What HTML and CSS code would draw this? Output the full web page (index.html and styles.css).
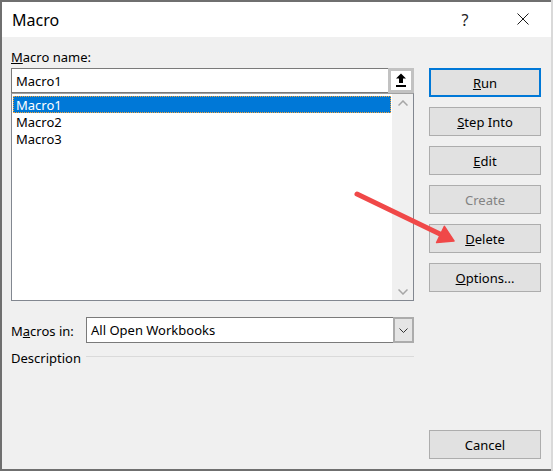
FILE: index.html
```html
<!DOCTYPE html>
<html>
<head>
<meta charset="utf-8">
<title>Macro</title>
<link rel="stylesheet" href="styles.css">
</head>
<body>
<div class="dialog">
  <div class="titlebar">
    <span class="title">Macro</span>
    <span class="help">?</span>
    <span class="close">
      <svg width="12" height="12" viewBox="0 0 12 12"><path d="M0.5 0.5 L11.5 11.5 M11.5 0.5 L0.5 11.5" stroke="#1a1a1a" stroke-width="1" fill="none"/></svg>
    </span>
  </div>
  <div class="content">
    <div class="left">
      <div class="label"><u>M</u>acro name:</div>
      <div class="namebox">
        <div class="nametext">Macro1</div>
        <div class="upbtn">
          <svg width="12" height="15" viewBox="0 0 12 15"><path d="M6 0.5 L11 5.5 L8 5.5 L8 10 L4 10 L4 5.5 L1 5.5 Z" fill="#000"/><rect x="1" y="12" width="10" height="2" fill="#000"/></svg>
        </div>
      </div>
      <div class="listbox">
        <div class="rows">
          <div class="row selected">Macro1</div>
          <div class="row">Macro2</div>
          <div class="row">Macro3</div>
        </div>
        <div class="scrollbar">
          <div class="sbtn">
            <svg width="10" height="6" viewBox="0 0 10 6"><path d="M0.5 5.5 L5 1 L9.5 5.5" stroke="#a6a6a6" stroke-width="1.5" fill="none"/></svg>
          </div>
          <div class="strack"></div>
          <div class="sbtn">
            <svg width="10" height="6" viewBox="0 0 10 6"><path d="M0.5 0.5 L5 5 L9.5 0.5" stroke="#a6a6a6" stroke-width="1.5" fill="none"/></svg>
          </div>
        </div>
      </div>
      <div class="inrow">
        <div class="inlabel">M<u>a</u>cros in:</div>
        <div class="combo">
          <div class="combotext">All Open Workbooks</div>
          <div class="dropbtn">
            <svg width="9" height="5" viewBox="0 0 9 5"><path d="M0.5 0.5 L4.5 4.5 L8.5 0.5" stroke="#333" stroke-width="1" fill="none"/></svg>
          </div>
        </div>
      </div>
      <div class="descrow">
        <span class="desclabel">Description</span>
        <span class="descline"></span>
      </div>
    </div>
    <div class="right">
      <div class="btn default"><span><u>R</u>un</span></div>
      <div class="btn"><span><u>S</u>tep Into</span></div>
      <div class="btn"><span><u>E</u>dit</span></div>
      <div class="btn disabled"><span>Create</span></div>
      <div class="btn"><span><u>D</u>elete</span></div>
      <div class="btn"><span><u>O</u>ptions...</span></div>
      <div class="btn cancel"><span>Cancel</span></div>
    </div>
  </div>
</div>
<svg class="arrow" width="553" height="471" viewBox="0 0 553 471">
  <line x1="357" y1="194" x2="441" y2="234.5" stroke="#f04848" stroke-width="5" stroke-linecap="round"/>
  <path d="M454 241 L436.6 242.6 L444.4 226.4 Z" fill="#f04848" stroke="#f04848" stroke-width="1.5" stroke-linejoin="round"/>
</svg>
</body>
</html>
```

FILE: styles.css
```css
html, body {
  margin: 0;
  padding: 0;
}
body {
  background: #d9d9d9;
  font-family: "Noto Sans", "Open Sans", sans-serif;
  font-size: 13px;
  color: #000;
  width: 553px;
  height: 471px;
  position: relative;
  overflow: hidden;
}
.dialog {
  width: 549px;
  height: 467px;
  border-top: 2px solid #6f6f6f;
  border-left: 2px solid #6f6f6f;
  border-bottom: 2px solid #6f6f6f;
  background: #f0f0f0;
  display: flex;
  flex-direction: column;
}
.titlebar {
  height: 35px;
  background: #fff;
  display: flex;
  align-items: center;
  padding-left: 10px;
  flex: none;
}
.title {
  font-size: 16px;
  color: #000;
  flex: 1;
}
.help {
  font-size: 16px;
  color: #222;
  width: 14px;
  margin-right: 45px;
  text-align: center;
}
.close {
  display: flex;
  margin-right: 22px;
  margin-top: -1px;
}
.content {
  flex: 1;
  display: flex;
  gap: 15px;
  padding: 11px 10px 10px 9px;
}
.left {
  width: 403px;
  display: flex;
  flex-direction: column;
}
.label {
  height: 18px;
  line-height: 19px;
  margin-bottom: 2px;
}
.namebox {
  height: 23px;
  border: 1px solid #7a7a7a;
  background: #fff;
  display: flex;
}
.nametext {
  flex: 1;
  padding-left: 4px;
  line-height: 24px;
}
.upbtn {
  width: 20px;
  margin: -1px -1px -1px 0;
  border: 3px solid #c2c2c2;
  background: #fff;
  display: flex;
  align-items: center;
  justify-content: center;
}
.listbox {
  height: 206px;
  border: 1px solid #828790;
  border-top: 1px solid #a0a0a0;
  background: #fff;
  display: flex;
}
.rows {
  flex: 1;
  padding: 2px 1px 0 1px;
}
.row {
  height: 17px;
  line-height: 17px;
  padding-left: 2px;
  border: 1px solid transparent;
  box-sizing: border-box;
}
.row.selected {
  background: #0078d7;
  color: #fff;
  border: 1px dotted #f2a33a;
}
.scrollbar {
  width: 21px;
  background: #f0f0f0;
  display: flex;
  flex-direction: column;
}
.sbtn {
  height: 17px;
  display: flex;
  align-items: center;
  justify-content: center;
}
.strack {
  flex: 1;
}
.inrow {
  margin-top: 16px;
  display: flex;
  align-items: center;
}
.inlabel {
  width: 75px;
  padding-top: 1px;
}
.combo {
  flex: 1;
  height: 24px;
  border: 1px solid #7a7a7a;
  background: #fff;
  display: flex;
}
.combotext {
  flex: 1;
  line-height: 25px;
  padding-left: 4px;
}
.dropbtn {
  width: 17px;
  margin: -1px -1px -1px 0;
  border: 2px solid #acacac;
  background: #e5e5e5;
  display: flex;
  align-items: center;
  justify-content: center;
}
.descrow {
  margin-top: 5px;
  height: 18px;
  display: flex;
  align-items: center;
}
.desclabel {
  line-height: 18px;
  padding-top: 2px;
}
.descline {
  flex: 1;
  height: 1px;
  background: #dadada;
  margin-left: 5px;
  margin-top: -2px;
}
.right {
  width: 112px;
  display: flex;
  flex-direction: column;
  gap: 10px;
  padding-top: 20px;
}
.btn {
  height: 29px;
  box-sizing: border-box;
  border: 1px solid #adadad;
  background: #e1e1e1;
  display: flex;
  align-items: center;
  justify-content: center;
  padding-top: 1px;
}
.btn.default {
  border: 2px solid #0078d7;
}
.btn.disabled {
  color: #838383;
}
.btn.cancel {
  margin-top: auto;
}
.arrow {
  position: absolute;
  left: 0;
  top: 0;
  pointer-events: none;
}
```
